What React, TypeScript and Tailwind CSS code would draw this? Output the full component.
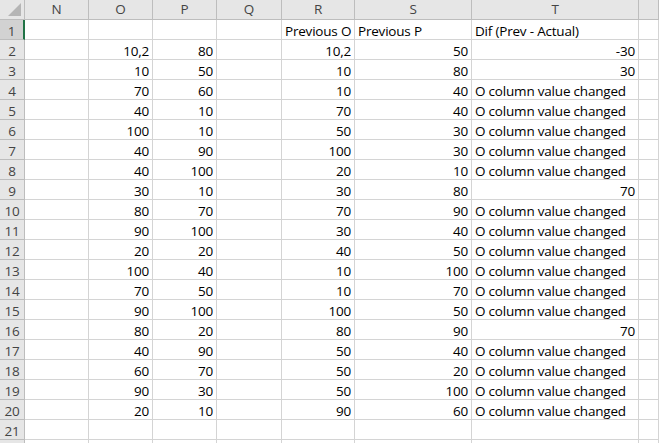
const rows: (string | null)[][] = [
  [null, null, null, 'Previous O', 'Previous P', 'Dif (Prev - Actual)'],
  ['10,2', '80', null, '10,2', '50', '-30'],
  ['10', '50', null, '10', '80', '30'],
  ['70', '60', null, '10', '40', 'O column value changed'],
  ['40', '10', null, '70', '40', 'O column value changed'],
  ['100', '10', null, '50', '30', 'O column value changed'],
  ['40', '90', null, '100', '30', 'O column value changed'],
  ['40', '100', null, '20', '10', 'O column value changed'],
  ['30', '10', null, '30', '80', '70'],
  ['80', '70', null, '70', '90', 'O column value changed'],
  ['90', '100', null, '30', '40', 'O column value changed'],
  ['20', '20', null, '40', '50', 'O column value changed'],
  ['100', '40', null, '10', '100', 'O column value changed'],
  ['70', '50', null, '10', '70', 'O column value changed'],
  ['90', '100', null, '100', '50', 'O column value changed'],
  ['80', '20', null, '80', '90', '70'],
  ['40', '90', null, '50', '40', 'O column value changed'],
  ['60', '70', null, '50', '20', 'O column value changed'],
  ['90', '30', null, '50', '100', 'O column value changed'],
  ['20', '10', null, '90', '60', 'O column value changed'],
  [null, null, null, null, null, null],
  [null, null, null, null, null, null],
];

const cols = ['N', 'O', 'P', 'Q', 'R', 'S', 'T', ''];

function Cell({ value }: { value: string | null }) {
  const isNum = value !== null && /^-?[\d,]+$/.test(value);
  return (
    <div
      className={`h-5 border-r border-b border-[#d4d4d4] px-[3px] flex items-end pb-[1px] whitespace-nowrap overflow-visible leading-none ${
        isNum ? 'justify-end' : 'justify-start'
      }`}
    >
      {value}
    </div>
  );
}

export default function App() {
  return (
    <div className="w-[659px] h-[443px] overflow-hidden bg-white text-[13.5px] text-black font-['Open_Sans',_'Liberation_Sans',_sans-serif] tracking-[-0.2px]">
      <div className="grid grid-cols-[25px_64px_64px_64px_65px_73px_117px_167px_1fr]">
        <div className="h-5 bg-[#e6e6e6] border-r border-b border-[#bdbdbd] relative">
          <div className="absolute right-[3px] bottom-[3px] w-0 h-0 border-l-[13px] border-l-transparent border-b-[13px] border-b-[#b5b5b5]" />
        </div>
        {cols.map((c, i) => (
          <div
            key={i}
            className="h-5 bg-[#e6e6e6] border-r border-b border-[#bdbdbd] flex items-center justify-center text-[#444] leading-none"
          >
            {c}
          </div>
        ))}
        {rows.map((r, ri) => {
          const cells = [null, r[0], r[1], r[2], r[3], r[4], r[5], null];
          // last row only peeks in at the bottom edge, so no label
          const label = ri < 21 ? ri + 1 : '';
          return [
            <div
              key={`h${ri}`}
              className={`h-5 border-b border-[#bdbdbd] flex items-end justify-center pb-[1px] leading-none text-[#444] ${
                ri === 0 ? 'bg-[#d2d2d2] border-r-2 border-r-[#217346]' : 'bg-[#e6e6e6] border-r'
              }`}
            >
              {label}
            </div>,
            ...cells.map((v, ci) => <Cell key={`${ri}-${ci}`} value={v} />),
          ];
        })}
      </div>
    </div>
  );
}
